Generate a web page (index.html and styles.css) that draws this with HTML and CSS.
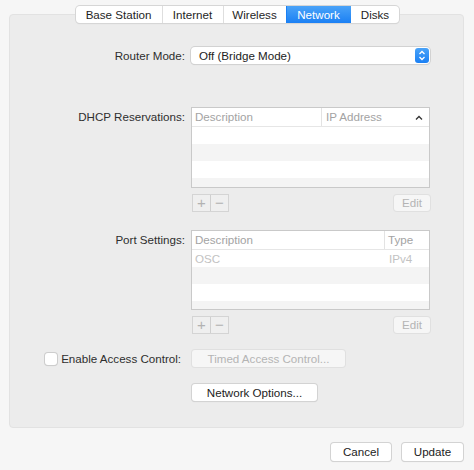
FILE: index.html
```html
<!DOCTYPE html>
<html lang="en">
<head>
    <meta charset="UTF-8">
    <meta name="viewport" content="width=device-width, initial-scale=1.0">
    <title>Network</title>
    <link rel="stylesheet" href="styles.css">
</head>
<body>
    <div class="window">
        <div class="tabs">
            <div class="tab">Base Station</div>
            <div class="tab">Internet</div>
            <div class="tab">Wireless</div>
            <div class="tab active">Network</div>
            <div class="tab">Disks</div>
        </div>

        <div class="panel">
            <!-- Router mode -->
            <div class="row row-router">
                <div class="label">Router Mode:</div>
                <div class="select">
                    <span>Off (Bridge Mode)</span>
                    <span class="stepper">
                        <svg width="14" height="15" viewBox="0 0 14 15">
                            <path d="M4.5 6 L7 3.5 L9.5 6" fill="none" stroke="#fff" stroke-width="1.3"/>
                            <path d="M4.5 9 L7 11.5 L9.5 9" fill="none" stroke="#fff" stroke-width="1.3"/>
                        </svg>
                    </span>
                </div>
            </div>

            <!-- DHCP reservations -->
            <div class="row row-dhcp">
                <div class="label label-top">DHCP Reservations:</div>
                <div class="list-block">
                    <div class="table">
                        <div class="thead">
                            <div class="th th-desc">Description</div>
                            <div class="th th-ip">IP Address
                                <svg class="sort" width="8" height="5" viewBox="0 0 8 5">
                                    <path d="M1 4.5 L4 1.5 L7 4.5" fill="none" stroke="#333" stroke-width="1.3"/>
                                </svg>
                            </div>
                        </div>
                        <div class="tr"></div>
                        <div class="tr alt"></div>
                        <div class="tr"></div>
                        <div class="tr alt"></div>
                    </div>
                    <div class="list-tools">
                        <div class="seg">
                            <span class="seg-btn">+</span>
                            <span class="seg-btn">&minus;</span>
                        </div>
                        <div class="btn small disabled">Edit</div>
                    </div>
                </div>
            </div>

            <!-- Port settings -->
            <div class="row row-port">
                <div class="label label-top">Port Settings:</div>
                <div class="list-block">
                    <div class="table">
                        <div class="thead">
                            <div class="th th-desc wide">Description</div>
                            <div class="th th-type">Type</div>
                        </div>
                        <div class="tr">
                            <div class="td wide">OSC</div>
                            <div class="td td-type">IPv4</div>
                        </div>
                        <div class="tr alt"></div>
                        <div class="tr"></div>
                        <div class="tr alt"></div>
                    </div>
                    <div class="list-tools">
                        <div class="seg">
                            <span class="seg-btn">+</span>
                            <span class="seg-btn">&minus;</span>
                        </div>
                        <div class="btn small disabled">Edit</div>
                    </div>
                </div>
            </div>

            <!-- Access control -->
            <div class="row row-access">
                <div class="label check-label">
                    <span class="checkbox"></span>
                    Enable Access Control:
                </div>
                <div class="btn timed disabled">Timed Access Control...</div>
            </div>

            <div class="row row-options">
                <div></div>
                <div class="btn options">Network Options...</div>
            </div>
        </div>

        <div class="footer">
            <div class="btn cancel">Cancel</div>
            <div class="btn update">Update</div>
        </div>
    </div>
</body>
</html>
```

FILE: styles.css
```css
body {
    margin: 0;
    background-color: #f6f6f6;
    font-family: "Liberation Sans", Arial, sans-serif;
    font-size: 11.6px;
    color: #262626;
}

.window {
    width: 474px;
    height: 470px;
    padding-top: 6px;
    box-sizing: border-box;
}

/* Tabs */
.tabs {
    position: relative;
    z-index: 1;
    display: flex;
    width: 323px;
    height: 17px;
    margin: 0 auto;
    background-color: #fff;
    border-radius: 4px;
    box-shadow: 0 0 0 1px #d6d6d6, 0 1px 1px rgba(0, 0, 0, 0.12);
    overflow: hidden;
}

.tab {
    display: flex;
    align-items: center;
    justify-content: center;
    line-height: 17px;
    border-left: 1px solid #dedede;
    color: #1e1e1e;
}

.tab:first-child {
    border-left: none;
    width: 86px;
}

.tab:nth-child(2) { width: 60px; }
.tab:nth-child(3) { width: 62px; }
.tab:nth-child(4) { width: 64px; }
.tab:nth-child(5) { flex: 1; }

.tab.active {
    background: linear-gradient(#4aa3f8, #1b80f4);
    color: #fff;
    border-left-color: #1b80f4;
}

.tab.active + .tab {
    border-left-color: transparent;
}

/* Panel */
.panel {
    margin: -9px 10px 0 9px;
    height: 414px;
    box-sizing: border-box;
    padding-top: 32px;
    background-color: #ececec;
    border: 1px solid #e2e2e2;
    border-radius: 4px;
}

.row {
    display: grid;
    grid-template-columns: 175px 239px;
    column-gap: 6px;
}

.label {
    text-align: right;
    color: #2e2e2e;
    line-height: 17px;
}

.label-top {
    line-height: 19px;
}

.row-dhcp { margin-top: 43px; }
.row-port { margin-top: 18px; }
.row-access { margin-top: 16px; }
.row-options { margin-top: 17px; }

/* Select */
.select {
    display: flex;
    align-items: center;
    justify-content: space-between;
    height: 17px;
    padding-left: 8px;
    padding-right: 1px;
    background-color: #fff;
    border-radius: 4px;
    box-shadow: 0 0 0 1px #d2d2d2, 0 1px 1px rgba(0, 0, 0, 0.15);
    color: #222;
}

.stepper {
    display: flex;
    width: 14px;
    height: 15px;
    background: linear-gradient(#4aa3f8, #1b80f4);
    border-radius: 3px;
}

/* Tables */
.table {
    height: 81px;
    box-sizing: border-box;
    border: 1px solid #c9c9c9;
    background-color: #fff;
    overflow: hidden;
}

.row-port .table {
    height: 80px;
}

.thead {
    display: flex;
    height: 18px;
    border-bottom: 1px solid #e6e6e6;
}

.th {
    line-height: 18px;
    padding-left: 3px;
    color: #a3a3a3;
    box-sizing: border-box;
}

.th-desc {
    width: 130px;
    border-right: 1px solid #e3e3e3;
}

.th-ip {
    flex: 1;
    display: flex;
    align-items: center;
    justify-content: space-between;
    padding-left: 4px;
    padding-right: 6px;
}

.wide {
    width: 193px;
}

.th-type {
    flex: 1;
    padding-left: 3px;
}

.tr {
    display: flex;
    height: 17px;
}

.tr.alt {
    background-color: #f4f4f4;
}

.td {
    line-height: 17px;
    padding-left: 3px;
    color: #c2c2c2;
    box-sizing: border-box;
}

.td-type {
    flex: 1;
    padding-left: 4px;
}

.list-tools {
    display: flex;
    justify-content: space-between;
    align-items: center;
    margin-top: 6px;
}

.seg {
    display: flex;
    margin-left: 1px;
    border: 1px solid #d4d4d4;
    background-color: #efefef;
}

.seg-btn {
    width: 17px;
    height: 16px;
    line-height: 16px;
    text-align: center;
    font-size: 15px;
    color: #b2b2b2;
}

.seg-btn + .seg-btn {
    border-left: 1px solid #cfcfcf;
}

/* Buttons */
.btn {
    height: 17px;
    line-height: 17px;
    text-align: center;
    background-color: #fff;
    border-radius: 3px;
    box-shadow: 0 0 0 1px #d3d3d3, 0 1px 1px rgba(0, 0, 0, 0.15);
    color: #222;
    box-sizing: border-box;
}

.btn.disabled {
    background-color: #f6f6f6;
    color: #b4b4b4;
    box-shadow: 0 0 0 1px #e0e0e0;
}

.btn.small {
    width: 36px;
    height: 16px;
    line-height: 16px;
}

.btn.timed {
    width: 153px;
    margin-left: 1px;
}

.btn.options {
    width: 125px;
    margin-left: 1px;
}

/* Checkbox */
.check-label {
    display: flex;
    justify-content: flex-end;
    align-items: center;
    gap: 4px;
    padding-right: 4px;
}

.checkbox {
    width: 12px;
    height: 12px;
    background-color: #fff;
    border-radius: 3px;
    box-shadow: 0 0 0 1px #cdcdcd, 0 1px 1px rgba(0, 0, 0, 0.12);
}

/* Footer */
.footer {
    display: flex;
    justify-content: flex-end;
    gap: 11px;
    margin-top: 15px;
    padding-right: 11px;
}

.footer .btn {
    height: 18px;
    line-height: 18px;
}

.cancel { width: 60px; }
.update { width: 61px; }
```
